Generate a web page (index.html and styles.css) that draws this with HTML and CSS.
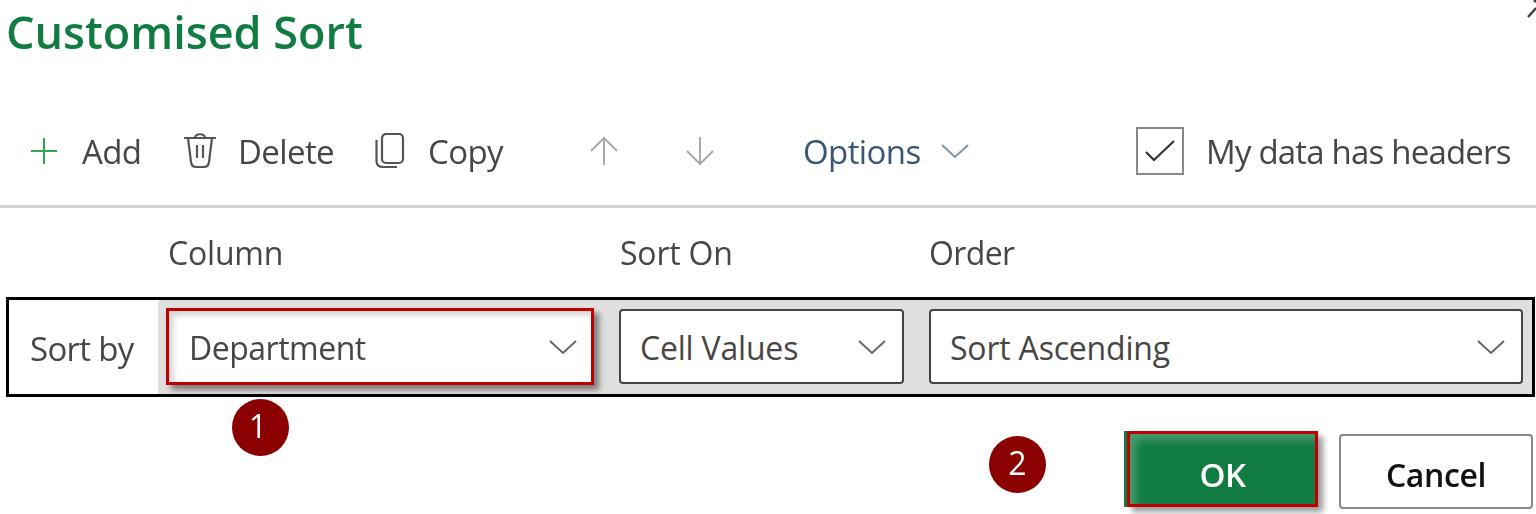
FILE: index.html
```html
<!DOCTYPE html>
<html lang="en">
<head>
<meta charset="utf-8">
<title>Customised Sort</title>
<link rel="stylesheet" href="styles.css">
</head>
<body>
<main class="dialog">
  <h1 class="title">Customised Sort</h1>
  <svg class="close" width="10" height="20" viewBox="0 0 10 20"><path d="M2 17L10 8M8 0L10 2" fill="none" stroke="#444" stroke-width="2.500"/></svg>
  <div class="toolbar">
    <div class="tool tool-add">
      <svg class="icon" width="28" height="28" viewBox="0 0 28 28"><path d="M14 1V27M1 14H27" fill="none" stroke="#2ea84f" stroke-width="2"/></svg>
      <span>Add</span>
    </div>
    <div class="tool tool-delete">
      <svg class="icon" width="34" height="36" viewBox="0 0 34 36"><path d="M1 5H33M12 5C12 0 22 0 22 5M5 5L8 29C8.500 33 11 34 13 34H21C23 34 25.500 33 26 29L29 5M14 12V25M20 12V25" fill="none" stroke="#555" stroke-width="2.200"/></svg>
      <span>Delete</span>
    </div>
    <div class="tool tool-copy">
      <svg class="icon" width="30" height="36" viewBox="0 0 30 36"><rect x="7" y="1" width="21" height="29" rx="4" fill="none" stroke="#555" stroke-width="2.200"/><path d="M1.500 7V28C1.500 32 4 34 8 34H22" fill="none" stroke="#555" stroke-width="2.200"/></svg>
      <span>Copy</span>
    </div>
    <svg class="arrow arrow-up" width="28" height="30" viewBox="0 0 28 30"><path d="M14 29V2M1 15L14 2L27 15" fill="none" stroke="#a9a9a9" stroke-width="2"/></svg>
    <svg class="arrow arrow-down" width="28" height="30" viewBox="0 0 28 30"><path d="M14 1V28M1 15L14 28L27 15" fill="none" stroke="#a9a9a9" stroke-width="2"/></svg>
    <div class="tool tool-options">
      <span class="options-label">Options</span>
      <svg class="chev" width="28" height="16" viewBox="0 0 28 16"><path d="M1 2L14 14L27 2" fill="none" stroke="#7d94ad" stroke-width="2"/></svg>
    </div>
    <label class="headers">
      <span class="checkbox"><svg width="32" height="24" viewBox="0 0 32 24"><path d="M2 13L10 21L30 2" fill="none" stroke="#333" stroke-width="2.200"/></svg></span>
      <span>My data has headers</span>
    </label>
  </div>
  <div class="divider"></div>
  <div class="headings">
    <span class="h-col">Column</span>
    <span class="h-on">Sort On</span>
    <span class="h-order">Order</span>
  </div>
  <div class="sort-row">
    <div class="sort-label">Sort by</div>
    <div class="sort-fields">
      <div class="select select-dept"><span class="select-text">Department</span><svg class="chev" width="28" height="16" viewBox="0 0 28 16"><path d="M1 2L14 14L27 2" fill="none" stroke="#666" stroke-width="2"/></svg></div>
      <div class="select select-on"><span class="select-text">Cell Values</span><svg class="chev" width="28" height="16" viewBox="0 0 28 16"><path d="M1 2L14 14L27 2" fill="none" stroke="#666" stroke-width="2"/></svg></div>
      <div class="select select-order"><span class="select-text">Sort Ascending</span><svg class="chev" width="28" height="16" viewBox="0 0 28 16"><path d="M1 2L14 14L27 2" fill="none" stroke="#666" stroke-width="2"/></svg></div>
    </div>
  </div>
  <div class="footer">
    <button class="btn btn-ok">OK</button>
    <button class="btn btn-cancel">Cancel</button>
  </div>
  <div class="badge badge-one">1</div>
  <div class="badge badge-two">2</div>
</main>
</body>
</html>
```
FILE: styles.css
```css
* { box-sizing: border-box; }
html, body { margin: 0; height: 514px; overflow: hidden; background: #fff; }
body { font-family: "Open Sans", "Noto Sans", sans-serif; color: #484644; }
.dialog { position: relative; width: 1536px; height: 514px; overflow: hidden; filter: blur(0.4px); }
.title { margin: 0; padding: 4px 0 0 6px; height: 115px; font-size: 45px; line-height: 56px; font-weight: 600; color: #107c41; }
.close { position: absolute; right: 0; top: 0; }
.toolbar { display: flex; align-items: center; height: 72px; padding-left: 30px; font-size: 33px; letter-spacing: -0.6px; }
.tool { display: flex; align-items: center; }
.tool-add { width: 153px; gap: 24px; }
.tool-delete { width: 192px; gap: 21px; }
.tool-copy { width: 215px; gap: 23px; }
.arrow-down { margin-left: 68px; }
.tool-options { margin-left: 89px; gap: 20px; width: 333px; }
.options-label { color: #3a5674; }
.headers { display: flex; align-items: center; gap: 22px; white-space: nowrap; letter-spacing: -0.8px; }
.checkbox { width: 48px; height: 48px; border: 2px solid #8a8886; display: flex; align-items: center; justify-content: center; }
.divider { height: 3px; margin-top: 18px; background: #d2d0ce; }
.headings { display: grid; grid-template-columns: 452px 309px 1fr; padding-left: 168px; height: 89px; padding-top: 23px; font-size: 32px; line-height: 44px; letter-spacing: -0.2px; }
.h-order { letter-spacing: -0.6px; }
.sort-row { display: flex; width: 1529px; height: 100px; margin-left: 6px; border: 3px solid #000; background: #e1dfdd; }
.sort-label { width: 149px; background: #fff; padding-left: 21px; font-size: 33px; line-height: 97px; letter-spacing: -0.7px; }
.sort-fields { display: flex; flex: 1; gap: 25px; padding: 8px 9px 0 8px; }
.select { display: flex; align-items: center; justify-content: space-between; height: 76px; background: #fff; border: 2px solid #444; border-radius: 4px; padding: 0 16px 0 19px; font-size: 32px; line-height: 44px; letter-spacing: -0.2px; }
.select-text { padding-top: 2px; }
.select-dept { width: 428px; height: 77px; border: 3px solid #c00000; border-radius: 0; padding-left: 20px; padding-right: 14px; letter-spacing: -0.5px; box-shadow: 5px 5px 6px rgba(0,0,0,.45), inset 4px 4px 6px rgba(0,0,0,.18); }
.select-on { width: 285px; margin-top: 1px; height: 75px; }
.select-order { flex: 1; margin-top: 1px; height: 75px; }
.footer { display: flex; justify-content: flex-end; gap: 21px; padding: 34px 3px 0 0; }
.btn { font-family: inherit; font-size: 32px; font-weight: 600; letter-spacing: -0.4px; padding: 6px 0 0; }
.btn-ok { width: 191px; height: 76px; padding-top: 10px; font-size: 33px; color: #fff; background: #107c41; border: 3px solid #c00000; box-shadow: -3px 0 0 #107c41, 5px 5px 6px rgba(0,0,0,.4), inset 6px 6px 8px rgba(255,255,255,.25); }
.btn-cancel { width: 194px; height: 75px; margin-top: 3px; color: #111; background: #fff; border: 2px solid #8a8886; border-radius: 4px; }
.badge { position: absolute; width: 57px; height: 57px; border-radius: 50%; background: #8b0000; color: #fff; font-size: 32px; font-weight: 400; line-height: 54px; text-align: center; }
.badge-one { left: 232px; top: 399px; padding-right: 5px; }
.badge-two { left: 989px; top: 436px; }
```
